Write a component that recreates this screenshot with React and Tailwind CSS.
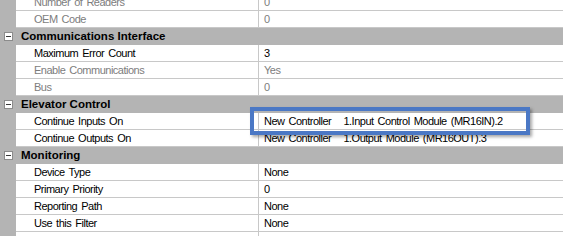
import React from 'react';

// property grid rows: [label, value, disabled]
const sections = [
  { title: null, rows: [['Number of Readers', '0', true], ['OEM Code', '0', true]] },
  {
    title: 'Communications Interface',
    rows: [
      ['Maximum Error Count', '3', false],
      ['Enable Communications', 'Yes', true],
      ['Bus', '0', true],
    ],
  },
  {
    title: 'Elevator Control',
    rows: [
      ['Continue Inputs On', 'New Controller   1.Input Control Module (MR16IN).2', false],
      ['Continue Outputs On', 'New Controller   1.Output Module (MR16OUT).3', false],
    ],
  },
  {
    title: 'Monitoring',
    rows: [
      ['Device Type', 'None', false],
      ['Primary Priority', '0', false],
      ['Reporting Path', 'None', false],
      ['Use this Filter', 'None', false],
      ['', '', false],
    ],
  },
];

function Collapse() {
  return (
    <div className="w-[16px] flex items-center justify-center">
      <div className="w-[9px] h-[9px] bg-white border border-[#8c8c8c] flex items-center justify-center">
        <div className="w-[5px] h-px bg-[#3a3a3a]" />
      </div>
    </div>
  );
}

export default function App() {
  return (
    <div
      className="relative w-[563px] h-[236px] overflow-hidden bg-[#b4b4b4] text-[11px] leading-none"
      style={{ fontFamily: '"Liberation Sans", Arial, sans-serif' }}
    >
      <div className="flex flex-col mt-[-6px]">
        {sections.map((s, i) => (
          <React.Fragment key={i}>
            {s.title && (
              <div className="h-[17px] flex items-center bg-[#b4b4b4]">
                <Collapse />
                <span className="ml-[5px] pt-px font-bold text-[11.5px] text-black">{s.title}</span>
              </div>
            )}
            {s.rows.map(([label, value, dis], j) => (
              <div
                key={j}
                className={`h-[17px] flex ml-[16px] bg-white border-b border-[#c8c8c8] tracking-[-0.5px] [word-spacing:1.5px] ${dis ? 'text-[#7d7d7d]' : 'text-black'}`}
              >
                <div className="w-[243px] pl-[18px] pt-px flex items-center border-r border-[#c8c8c8]">{label}</div>
                <div className="flex-1 pl-[5px] pt-px flex items-center whitespace-pre">{value}</div>
              </div>
            ))}
          </React.Fragment>
        ))}
      </div>
      {/* highlight box */}
      <div className="absolute left-[250px] top-[107px] w-[280px] h-[28px] border-[4px] border-[#4b78c5] shadow-[2px_2px_3px_rgba(0,0,0,0.35)]" />
    </div>
  );
}
